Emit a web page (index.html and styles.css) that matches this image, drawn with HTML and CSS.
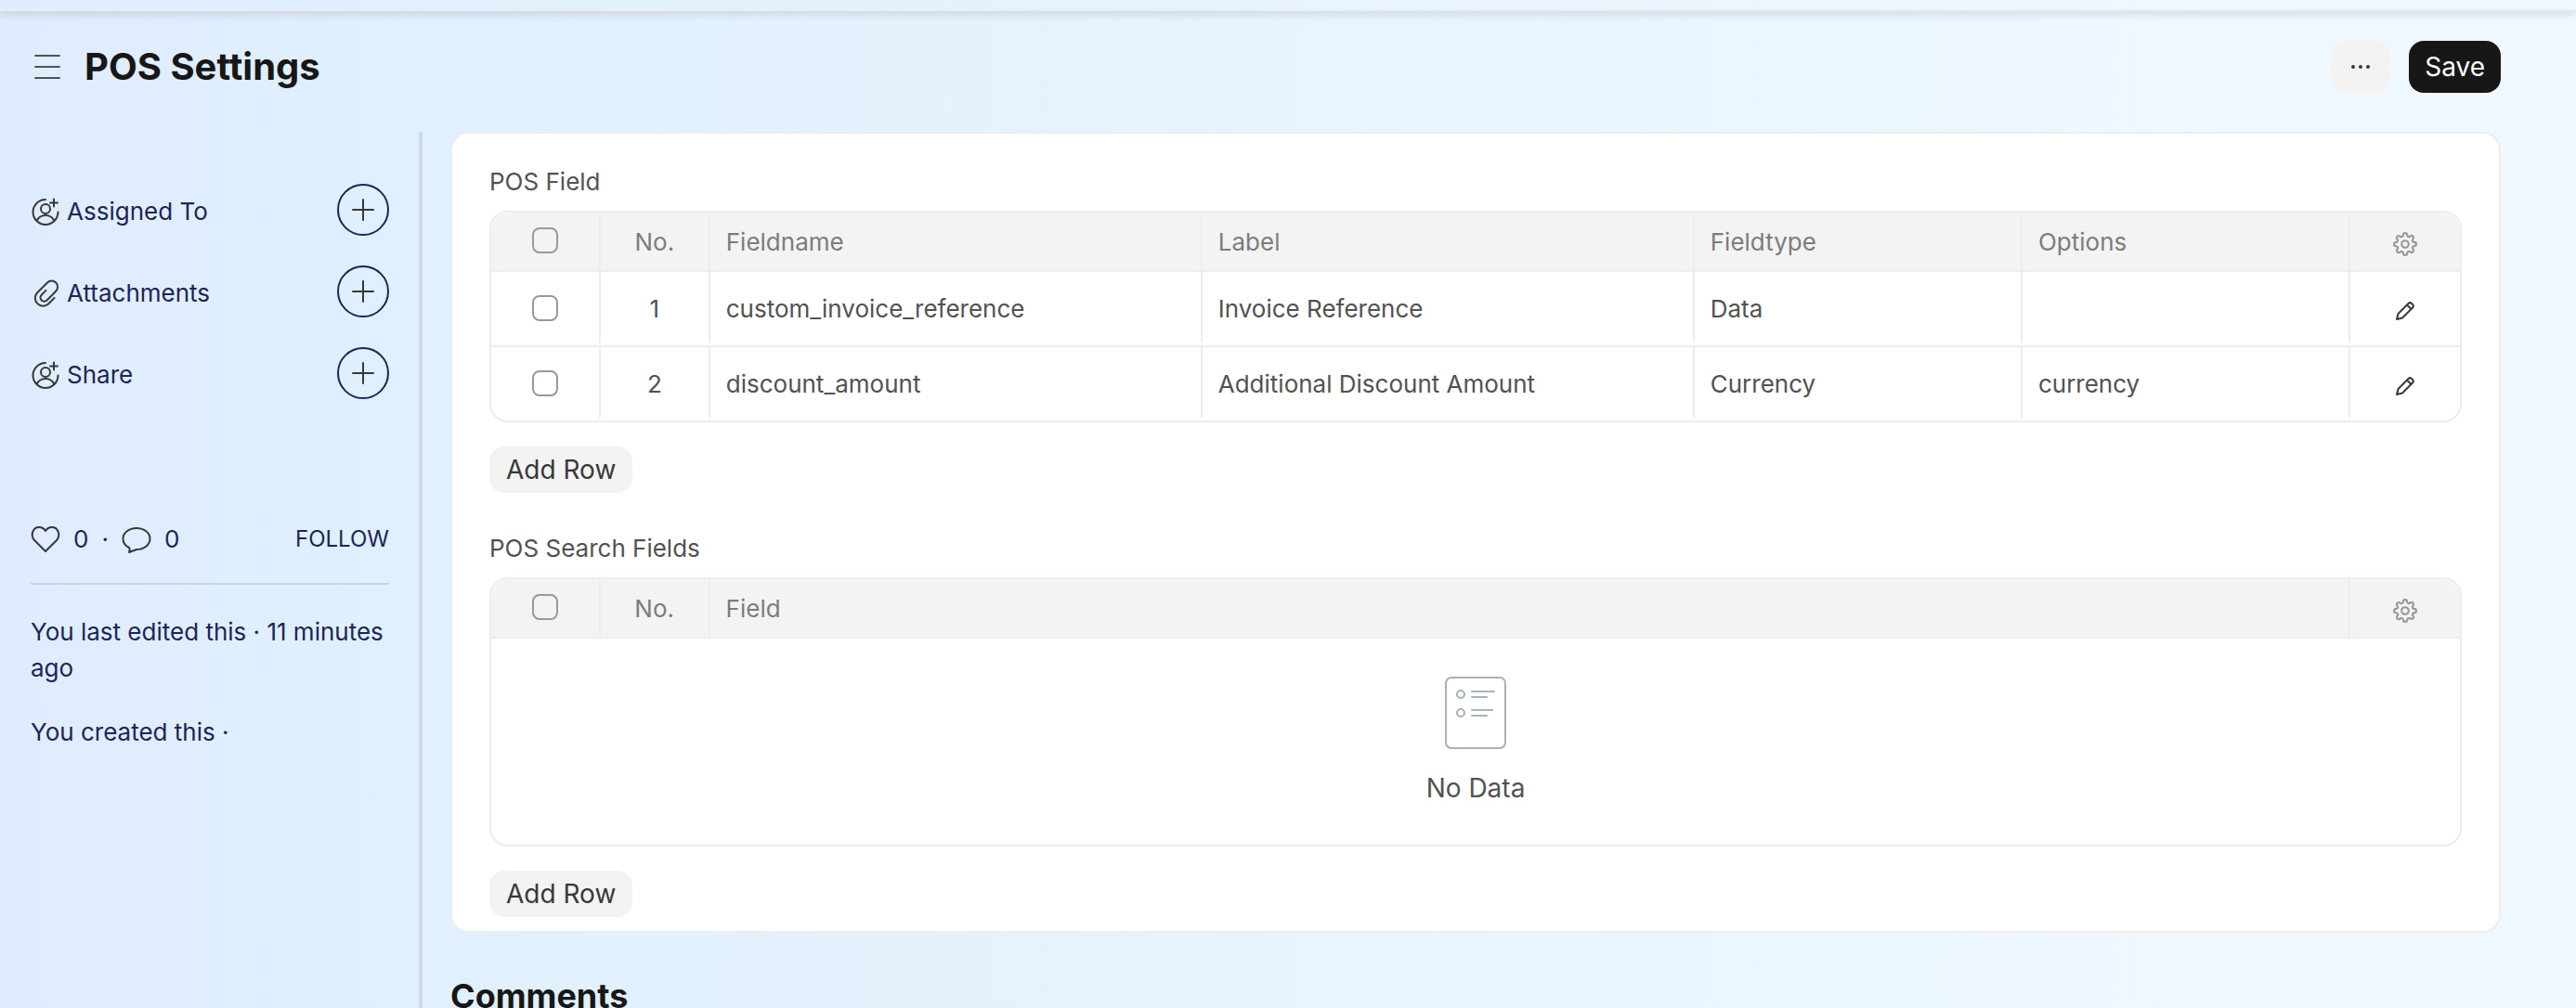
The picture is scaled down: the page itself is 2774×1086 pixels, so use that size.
FILE: index.html
```html
<!DOCTYPE html>
<html lang="en">
<head>
    <meta charset="UTF-8">
    <meta name="viewport" content="width=device-width, initial-scale=1.0">
    <title>POS Settings</title>
    <link rel="stylesheet" href="styles.css">
</head>
<body>
    <!-- shared icons -->
    <svg class="icon-defs" aria-hidden="true">
        <symbol id="icon-plus" viewBox="0 0 24 24">
            <path d="M12 1v22M1 12h22"/>
        </symbol>
        <symbol id="icon-assign" viewBox="0 0 32 32">
            <path d="M16 3a13.500 13.500 0 1 0 13.500 13.500M6.500 26c2-4 5.500-6 9.500-6s7.500 2 9.500 6M25 2.500v8M21 6.500h8"/>
            <circle cx="16" cy="13" r="5"/>
        </symbol>
        <symbol id="icon-gear" viewBox="0 0 24 24">
            <circle cx="12" cy="12" r="3.500"/>
            <path d="M19.400 15a1.650 1.650 0 0 0 .33 1.820l.06.06a2 2 0 0 1 0 2.830 2 2 0 0 1-2.830 0l-.06-.06a1.650 1.650 0 0 0-1.820-.33 1.650 1.650 0 0 0-1 1.510V21a2 2 0 0 1-2 2 2 2 0 0 1-2-2v-.09A1.650 1.650 0 0 0 9 19.400a1.650 1.650 0 0 0-1.820.33l-.06.06a2 2 0 0 1-2.830 0 2 2 0 0 1 0-2.830l.06-.06a1.650 1.650 0 0 0 .33-1.820 1.650 1.650 0 0 0-1.510-1H3a2 2 0 0 1-2-2 2 2 0 0 1 2-2h.09A1.650 1.650 0 0 0 4.600 9a1.650 1.650 0 0 0-.33-1.820l-.06-.06a2 2 0 0 1 0-2.830 2 2 0 0 1 2.830 0l.06.06a1.650 1.650 0 0 0 1.820.33H9a1.650 1.650 0 0 0 1-1.510V3a2 2 0 0 1 2-2 2 2 0 0 1 2 2v.09a1.650 1.650 0 0 0 1 1.510 1.650 1.650 0 0 0 1.820-.33l.06-.06a2 2 0 0 1 2.830 0 2 2 0 0 1 0 2.830l-.06.06a1.650 1.650 0 0 0-.33 1.820V9a1.650 1.650 0 0 0 1.510 1H21a2 2 0 0 1 2 2 2 2 0 0 1-2 2h-.09a1.650 1.650 0 0 0-1.510 1z"/>
        </symbol>
        <symbol id="icon-edit" viewBox="0 0 24 24">
            <path d="M3 21l1.500-6L15.500 4a2.500 2.500 0 0 1 3.500 0l1 1a2.500 2.500 0 0 1 0 3.500L9 19.500zM14 5.500l4.500 4.500"/>
        </symbol>
    </svg>

    <div class="navbar"></div>

    <header class="page-head">
        <button class="menu-btn" aria-label="Toggle sidebar">
            <svg viewBox="0 0 32 32"><path d="M3 4h26M3 16h26M3 28h26"/></svg>
        </button>
        <h1>POS Settings</h1>
        <div class="page-actions">
            <button class="btn btn-more" aria-label="Menu">
                <svg viewBox="0 0 24 8"><circle cx="4" cy="4" r="2"/><circle cx="12" cy="4" r="2"/><circle cx="20" cy="4" r="2"/></svg>
            </button>
            <button class="btn btn-primary">Save</button>
        </div>
    </header>

    <div class="page-body">
        <aside class="sidebar">
            <ul class="sidebar-menu">
                <li>
                    <span class="sidebar-label"><svg><use href="#icon-assign"/></svg>Assigned To</span>
                    <button class="add-btn" aria-label="Assign"><svg><use href="#icon-plus"/></svg></button>
                </li>
                <li>
                    <span class="sidebar-label"><svg viewBox="0 0 32 32"><path d="M25.500 21l-6.500 6.500a8.500 8.500 0 0 1-12-12L18 4.500a6.500 6.500 0 0 1 9.200 9.200L17.500 23.500a4 4 0 0 1-5.800-5.800l4.800-4.800"/></svg>Attachments</span>
                    <button class="add-btn" aria-label="Attach file"><svg><use href="#icon-plus"/></svg></button>
                </li>
                <li>
                    <span class="sidebar-label"><svg><use href="#icon-assign"/></svg>Share</span>
                    <button class="add-btn" aria-label="Share"><svg><use href="#icon-plus"/></svg></button>
                </li>
            </ul>
            <div class="sidebar-stats">
                <button class="stat" aria-label="Likes"><svg viewBox="0 0 32 32"><path d="M16 29L4 17C-1 11 3 3 9 3c3 0 5.500 1.500 7 4 1.500-2.500 4-4 7-4 6 0 10 8 5 14z"/></svg>0</button>
                <span>·</span>
                <button class="stat" aria-label="Comments"><svg viewBox="0 0 32 32"><path d="M8 25C4 23 1.500 19.500 1.500 15.500 1.500 9 8 4 16 4s14.500 5 14.500 11.500S24 27 16 27l-8 3c1-2 1-3.500 0-5z"/></svg>0</button>
                <button class="follow-btn">FOLLOW</button>
            </div>
            <div class="sidebar-log">
                <p>You last edited this · 11 minutes ago</p>
                <p>You created this ·</p>
            </div>
        </aside>

        <main class="content">
            <section class="form-card">
                <div class="field">
                    <h2 class="field-label" id="pos-field">POS Field</h2>
                    <div class="grid">
                        <table aria-labelledby="pos-field">
                            <thead>
                                <tr>
                                    <th class="center"><input type="checkbox" aria-label="Select all"></th>
                                    <th class="center">No.</th>
                                    <th class="col-lg">Fieldname</th>
                                    <th class="col-lg">Label</th>
                                    <th class="col-md">Fieldtype</th>
                                    <th class="col-md">Options</th>
                                    <th><button class="icon-btn gear" aria-label="Configure columns"><svg><use href="#icon-gear"/></svg></button></th>
                                </tr>
                            </thead>
                            <tbody>
                                <tr>
                                    <td class="center"><input type="checkbox" aria-label="Select row 1"></td>
                                    <td class="center">1</td>
                                    <td>custom_invoice_reference</td>
                                    <td>Invoice Reference</td>
                                    <td>Data</td>
                                    <td></td>
                                    <td><button class="icon-btn" aria-label="Edit row 1"><svg><use href="#icon-edit"/></svg></button></td>
                                </tr>
                                <tr>
                                    <td class="center"><input type="checkbox" aria-label="Select row 2"></td>
                                    <td class="center">2</td>
                                    <td>discount_amount</td>
                                    <td>Additional Discount Amount</td>
                                    <td>Currency</td>
                                    <td>currency</td>
                                    <td><button class="icon-btn" aria-label="Edit row 2"><svg><use href="#icon-edit"/></svg></button></td>
                                </tr>
                            </tbody>
                        </table>
                    </div>
                    <button class="btn btn-sm">Add Row</button>
                </div>

                <div class="field">
                    <h2 class="field-label" id="pos-search">POS Search Fields</h2>
                    <div class="grid">
                        <table aria-labelledby="pos-search">
                            <thead>
                                <tr>
                                    <th class="center"><input type="checkbox" aria-label="Select all"></th>
                                    <th class="center">No.</th>
                                    <th class="col-full">Field</th>
                                    <th><button class="icon-btn gear" aria-label="Configure columns"><svg><use href="#icon-gear"/></svg></button></th>
                                </tr>
                            </thead>
                        </table>
                        <div class="grid-empty">
                            <svg viewBox="0 0 66 78">
                                <rect x="1" y="1" width="64" height="76" rx="6"/>
                                <circle cx="17" cy="19" r="4"/>
                                <circle cx="17" cy="39" r="4"/>
                                <path d="M29 16h24M29 22h16M29 36h22M29 42h16"/>
                            </svg>
                            <p>No Data</p>
                        </div>
                    </div>
                    <button class="btn btn-sm">Add Row</button>
                </div>
            </section>

            <h2 class="comments-title">Comments</h2>
        </main>
    </div>
</body>
</html>
```
FILE: styles.css
```css
* {
    box-sizing: border-box;
}
body {
    margin: 0;
    min-height: 100vh;
    font-family: Inter, "Liberation Sans", sans-serif;
    font-size: 26px;
    line-height: 39px;
    color: #525252;
    background: linear-gradient(to right, #dfecfe, #e0f0fe 16%, #f0f8ff 90%);
}
h1, h2, p, ul {
    margin: 0;
    padding: 0;
}
button {
    font: inherit;
    color: inherit;
    background: none;
    border: none;
    padding: 0;
    cursor: pointer;
}
svg {
    fill: none;
    stroke: #383838;
    stroke-width: 2;
    stroke-linecap: round;
    stroke-linejoin: round;
}
.icon-defs {
    position: absolute;
    width: 0;
    height: 0;
}

/* header */
.navbar {
    height: 12px;
    border-bottom: 2px solid #ededed;
    box-shadow: 0 2px 12px rgba(0, 0, 0, .15);
}
.page-head {
    display: flex;
    align-items: center;
    padding: 32px 81px 42px 35px;
}
.menu-btn {
    display: flex;
    margin-right: 24px;
}
.menu-btn svg {
    width: 32px;
    height: 32px;
    stroke: #525252;
}
.page-head h1 {
    font-size: 40px;
    line-height: 56px;
    font-weight: 700;
    color: #171717;
}
.page-actions {
    display: flex;
    gap: 20px;
    margin-left: auto;
}
.btn {
    height: 56px;
    padding: 0 17px;
    border-radius: 16px;
    font-size: 28px;
    color: #383838;
    background-color: #f3f3f3;
}
.btn:hover {
    background-color: #ededed;
}
.btn-more {
    display: flex;
    align-items: center;
    justify-content: center;
    width: 64px;
}
.btn-more svg {
    width: 24px;
    height: 8px;
    flex: none;
    fill: #383838;
    stroke: none;
}
.btn-primary {
    color: #fff;
    background-color: #171717;
}
.btn-primary:hover {
    background-color: #383838;
}
.btn-sm {
    height: 50px;
    padding: 0 18px;
}

/* layout */
.page-body {
    display: flex;
    padding-right: 81px;
}
.sidebar {
    flex: none;
    width: 455px;
    padding: 56px 32px 0 33px;
    border-right: 4px solid #d1d8e5;
    color: #1b2559;
}
.content {
    flex: 1;
    min-width: 0;
    margin-left: 30px;
}

/* sidebar */
.sidebar-menu {
    display: flex;
    flex-direction: column;
    gap: 32px;
    list-style: none;
}
.sidebar-menu li {
    display: flex;
    align-items: center;
    justify-content: space-between;
}
.sidebar-label {
    display: flex;
    align-items: center;
    gap: 7px;
    padding-top: 3px;
}
.sidebar-label svg,
.stat svg {
    width: 32px;
    height: 32px;
}
.add-btn {
    display: flex;
    align-items: center;
    justify-content: center;
    width: 56px;
    height: 56px;
    border: 2px solid #1b2559;
    border-radius: 50%;
}
.add-btn svg {
    width: 24px;
    height: 24px;
}
.sidebar-stats {
    display: flex;
    align-items: center;
    gap: 14px;
    margin-top: 131px;
    padding-bottom: 28px;
    border-bottom: 2px solid #c9d4e1;
}
.stat {
    display: flex;
    align-items: center;
    gap: 14px;
}
.follow-btn {
    margin-left: auto;
    font-size: 24px;
}
.sidebar-log {
    display: flex;
    flex-direction: column;
    gap: 30px;
    margin-top: 31px;
}

/* form */
.form-card {
    padding: 32px 40px 15px;
    background-color: #fff;
    border: 2px solid #ededed;
    border-radius: 20px;
}
.field + .field {
    margin-top: 40px;
}
.field-label {
    margin-bottom: 12px;
    font-size: 26px;
    font-weight: 400;
}
.grid {
    margin-bottom: 26px;
    border: 2px solid #ededed;
    border-radius: 20px;
    overflow: hidden;
}
.grid table {
    width: 100%;
    table-layout: fixed;
    border-collapse: separate;
    border-spacing: 0;
}
.grid th,
.grid td {
    height: 81px;
    padding: 0 17px;
    text-align: left;
    font-weight: 400;
    border-bottom: 2px solid #ededed;
    /* column divider stops short of the row line */
    background: linear-gradient(#ededed, #ededed) right top / 2px calc(100% - 3px) no-repeat;
}
.grid th {
    height: 64px;
    color: #7c7c7c;
    background-color: #f3f3f3;
    background-size: 2px 100%;
}
.grid th:first-child {
    border-top-left-radius: 20px;
}
.grid th:last-child {
    border-top-right-radius: 20px;
}
.grid th:last-child,
.grid td:last-child {
    background-image: none;
}
.grid tbody tr:last-child td {
    height: 79px;
    border-bottom: none;
}
.grid .center {
    padding: 0 18px 0 16px;
    text-align: center;
}
.col-lg {
    width: 25%;
}
.col-md {
    width: 16.66%;
}
.col-full {
    width: 83.33%;
}
.grid input {
    appearance: none;
    display: block;
    width: 28px;
    height: 28px;
    margin: 0 auto 2px;
    border: 2px solid #999;
    border-radius: 8px;
}
.grid input:checked {
    background-color: #171717;
}
.icon-btn {
    display: block;
    margin: 0 auto;
    padding-top: 5px;
}
.icon-btn svg {
    display: block;
    width: 24px;
    height: 24px;
}
.icon-btn.gear svg {
    width: 26px;
    height: 26px;
    stroke: #999;
}
.grid-empty {
    display: flex;
    flex-direction: column;
    align-items: center;
    gap: 23px;
    padding: 41px 0;
    font-size: 28px;
}
.grid-empty svg {
    width: 66px;
    height: 78px;
    stroke: #a6b1b9;
}
.comments-title {
    margin-top: 41px;
    font-size: 36px;
    line-height: 54px;
    font-weight: 700;
    color: #171717;
}
```
